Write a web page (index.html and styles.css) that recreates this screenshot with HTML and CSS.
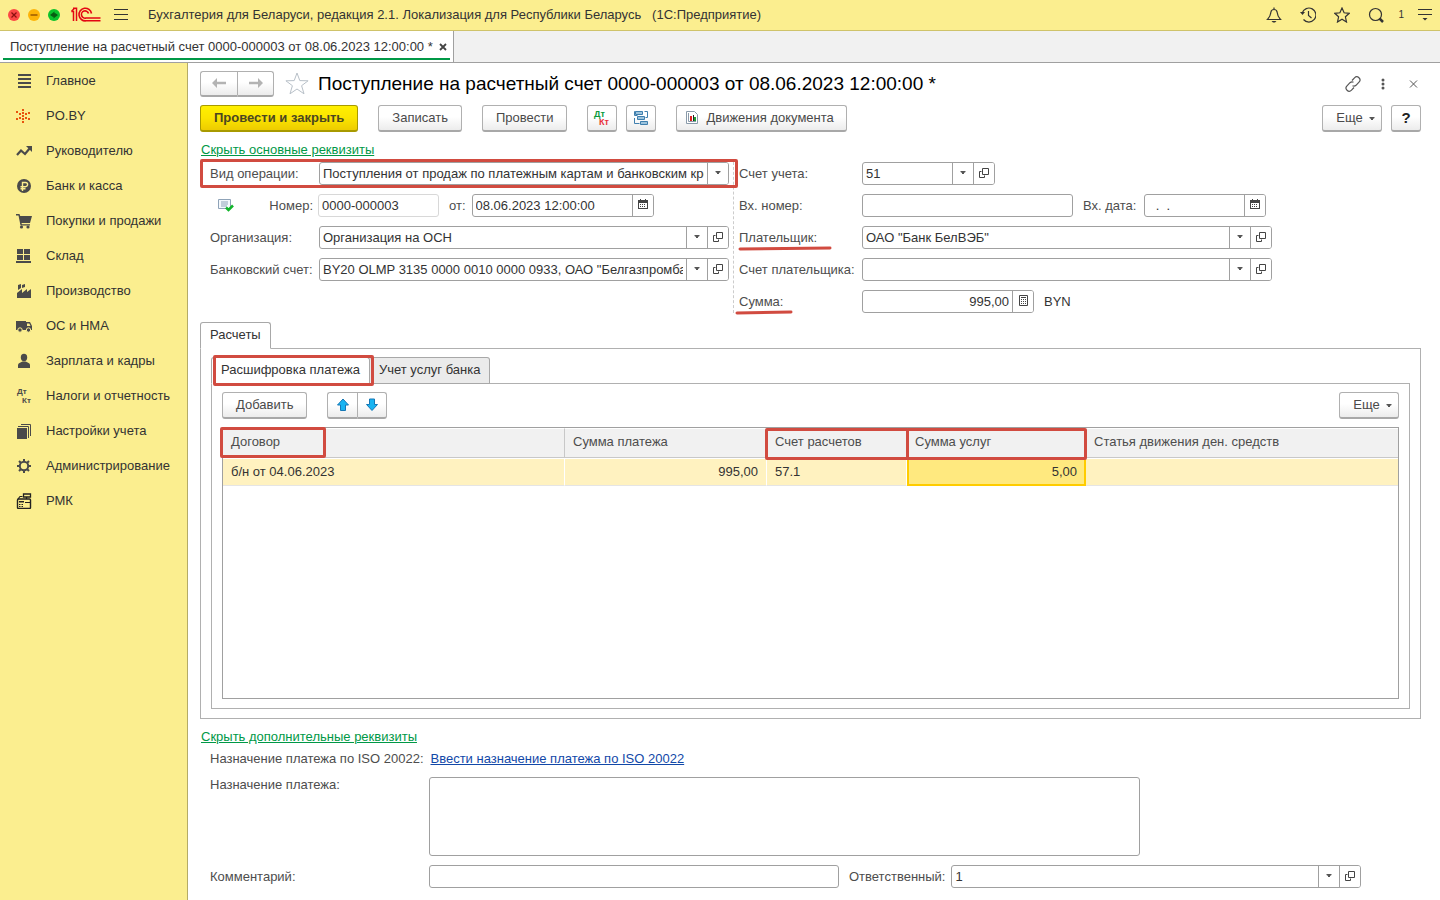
FILE: index.html
```html
<!DOCTYPE html>
<html lang="ru">
<head>
<meta charset="utf-8">
<meta name="viewport" content="width=device-width, initial-scale=1">
<title>Бухгалтерия для Беларуси</title>
<link rel="stylesheet" href="styles.css">
</head>
<body>
<svg class="sprite" aria-hidden="true">
  <symbol id="i-down" viewBox="0 0 6 4"><path d="M.5 0h5v1L4 2v1H2V2L.5 1z" fill="#555"/></symbol>
  <symbol id="i-open" viewBox="0 0 10 10"><path d="M3.5.5h6v6h-6zM2.500 3.500h-2v6h5v-2" fill="none" stroke="#444"/></symbol>
  <symbol id="i-cal" viewBox="0 0 10 11"><path d="M2 0h1v1h4V0h1v1h2v9H0V1h2z" fill="#444"/><path d="M1 4h8v5H1z" fill="#fff"/><path d="M2 5.500h6M2 7.500h6" stroke="#444" stroke-dasharray="1 1"/></symbol>
  <symbol id="i-calc" viewBox="0 0 9 11"><path d="M.5.5h8v10h-8z" fill="none" stroke="#444"/><path d="M2 2.500h5" stroke="#444"/><path d="M2 4.500h5M2 6.500h5M2 8.500h5" stroke="#444" stroke-dasharray="1 1"/></symbol>
</svg>

<header class="topbar">
  <div class="lights">
    <button class="plain" aria-label="Закрыть окно"><svg width="12" height="12"><circle cx="6" cy="6" r="6" fill="#fb4845"/><path d="M3.500 3.500l5 5M8.500 3.500l-5 5" stroke="#8a1010" stroke-width="1.200"/></svg></button>
    <button class="plain" aria-label="Свернуть"><svg width="12" height="12"><circle cx="6" cy="6" r="6" fill="#fdb409"/><path d="M2.500 6h7" stroke="#9a5a00" stroke-width="1.500"/></svg></button>
    <button class="plain" aria-label="Развернуть"><svg width="12" height="12"><circle cx="6" cy="6" r="6" fill="#0bc22c"/><path d="M2 6l4.500-3.500v4L5 8zM10 6L5.500 9.500v-4L7 4z" fill="#075c12"/></svg></button>
  </div>
  <svg class="logo" width="30" height="16" viewBox="0 0 30 16" fill="none" stroke="#e30613" stroke-width="1.500"><path d="M.3 4.500H2.500V14M2 1.300h3.500V14M.5 4.300L3.500 1.200"/><path d="M20.500 6.500A6.300 6.300 0 1 0 15 13.800h14.500M17.500 6.500A3.600 3.600 0 1 0 15 11h14.500" stroke-width="1.600"/></svg>
  <button class="plain burger" aria-label="Меню"><svg width="14" height="12"><path d="M0 .5h14M0 5.500h14M0 10.500h14" stroke="#333"/></svg></button>
  <div class="app-title">Бухгалтерия для Беларуси, редакция 2.1. Локализация для Республики Беларусь &nbsp; (1С:Предприятие)</div>
  <div class="top-tools">
    <button class="plain" aria-label="Уведомления"><svg width="16" height="16" fill="none" stroke="#333" stroke-width="1.200"><path d="M1.500 12.500h13c-2-2-3-3.500-3.300-7C11 3.500 9.500 2.500 8 2.500s-3 1-3.200 3c-.3 3.500-1.300 5-3.300 7zM8 .5v2"/><path d="M5.500 14h5L9 15.500H7z" fill="#333" stroke="none"/></svg></button>
    <button class="plain" aria-label="История"><svg width="16" height="16" fill="none" stroke="#333" stroke-width="1.200"><path d="M2.200 6A7 7 0 1 1 3.500 12.500M8.500 4v4.500l3 2.500"/><path d="M0 5h5L2.500 8z" fill="#333" stroke="none"/></svg></button>
    <button class="plain" aria-label="Избранное"><svg width="16" height="16" fill="none" stroke="#333" stroke-width="1.200"><path d="M8 1l2.100 4.800 5.100.5-3.800 3.500 1.100 5.200L8 12.300 3.500 15l1.100-5.200L.8 6.300l5.100-.5z"/></svg></button>
    <button class="plain" aria-label="Поиск"><svg width="16" height="16" fill="none" stroke="#333" stroke-width="1.200"><circle cx="7.500" cy="7.500" r="6"/><path d="M11.500 11.500l3.500 3.500" stroke-width="2.500"/></svg></button>
    <span class="count">1</span>
    <button class="plain" aria-label="Настройки"><svg width="14" height="12"><path d="M0 .5h14M0 5.500h14" stroke="#333"/><path d="M4.500 9h5L7 11.500z" fill="#333"/></svg></button>
  </div>
</header>

<nav class="window-tabs">
  <div class="window-tab"><a href="#doc" class="window-link">Поступление на расчетный счет 0000-000003 от 08.06.2023 12:00:00 *</a><button class="plain" aria-label="Закрыть вкладку"><svg width="8" height="8"><path d="M1 1l6 6M7 1L1 7" stroke="#444" stroke-width="1.800"/></svg></button></div>
</nav>

<div class="workspace">
  <nav class="sidebar">
    <a href="#"><svg width="16" height="16"><path d="M2 2h13M2 6h13M2 10h13M2 14h13" stroke="#4a4a4a" stroke-width="2"/></svg>Главное</a>
    <a href="#"><svg width="16" height="16" fill="#e8530e"><path d="M6 1h2v2H6zM6 4h2v2H6zM6 7h2v2H6zM6 10h2v2H6zM6 13h2v2H6zM3 5h2v2H3zM3 9h2v2H3zM9 5h2v2H9zM9 9h2v2H9zM0 3h2v2H0zM0 10h2v2H0zM12 4h2v2h-2zM12 10h2v2h-2z"/></svg>PO.BY</a>
    <a href="#"><svg width="16" height="16"><path d="M1 12l4-4.500L9 11l5-6" fill="none" stroke="#4a4a4a" stroke-width="2.200"/><path d="M10 3h6v6z" fill="#4a4a4a"/></svg>Руководителю</a>
    <a href="#"><svg width="16" height="16"><circle cx="8" cy="8" r="7" fill="#4a4a4a"/><path d="M6.500 13V4.500h3a2 2 0 0 1 0 4.200H4.500M4.500 10.700h5" fill="none" stroke="#fbee8f" stroke-width="1.400"/></svg>Банк и касса</a>
    <a href="#"><svg width="16" height="16" fill="#4a4a4a"><path d="M0 1h3.500l.7 2H16l-2 7H5.500l.3 1.300H14v1.200H4.500L2.500 2.500H0z"/><circle cx="5.500" cy="14" r="1.600"/><circle cx="12" cy="14" r="1.600"/></svg>Покупки и продажи</a>
    <a href="#"><svg width="16" height="16" fill="#4a4a4a"><path d="M1 1h6v5H1zM8 1h6v5H8zM1 7h6v5H1zM8 7h6v5H8zM0 13h15v2H0z"/></svg>Склад</a>
    <a href="#"><svg width="16" height="16" fill="#4a4a4a"><path d="M1 15V10l5-4v4l5-4v3l4-3v9zM2 2l3-1v4L2 7zM6 2l3-1v3L6 5z"/></svg>Производство</a>
    <a href="#"><svg width="16" height="16" fill="#4a4a4a"><path fill-rule="evenodd" d="M0 3h10v9H0zM10 4h4l2 4v4h-6zM11 5.500v2.500h3.500l-1.200-2.500z"/><circle cx="4" cy="12" r="2.200" stroke="#fbee8f"/><circle cx="12.500" cy="12" r="2.200" stroke="#fbee8f"/></svg>ОС и НМА</a>
    <a href="#"><svg width="16" height="16" fill="#4a4a4a"><ellipse cx="8" cy="4.500" rx="3.200" ry="3.700"/><path d="M2 15v-3c0-2 2.500-2.500 4.500-3.500h3C11.500 9.500 14 10 14 12v3z"/></svg>Зарплата и кадры</a>
    <a href="#"><svg width="16" height="16" class="dtkt dtkt-dark"><text x="1" y="6">Дт</text><text x="6" y="15">Кт</text></svg>Налоги и отчетность</a>
    <a href="#"><svg width="16" height="16"><path d="M1 5h10v11H1z" fill="#4a4a4a"/><path d="M2 3.500h10.500V15M5 1.500h9.500V13" fill="none" stroke="#4a4a4a"/></svg>Настройки учета</a>
    <a href="#"><svg width="16" height="16" fill="none" stroke="#4a4a4a"><circle cx="8" cy="8" r="4.200" stroke-width="2"/><path d="M8 1v3M8 12v3M1 8h3M12 8h3M3 3l2 2M11 11l2 2M13 3l-2 2M5 11l-2 2" stroke-width="2"/></svg>Администрирование</a>
    <a href="#"><svg width="16" height="16"><path d="M7.500 1h7v3h-7zM10.500 4v2" fill="none" stroke="#222" stroke-width="1.300"/><rect x="1.500" y="6" width="13" height="9.500" rx="1" fill="none" stroke="#222" stroke-width="1.400"/><path d="M2 6l2-2.500h2.500M9 9.500h5" fill="none" stroke="#222" stroke-width="1.200"/><path d="M3 8h5v1.500H3zM3 11h1.500v1H3zM5.500 11H7v1H5.500zM3 13h1.500v1H3zM5.500 13H7v1H5.500z" fill="#222"/></svg>РМК</a>
  </nav>

  <main class="doc" id="doc">
    <div class="doc-head">
      <div class="pair">
        <button class="btn" aria-label="Назад"><svg width="14" height="10"><path d="M0 5l5-5v3.700h9v2.600H5V10z" fill="#b3b3b3"/></svg></button>
        <button class="btn" aria-label="Вперед"><svg width="14" height="10"><path d="M14 5L9 0v3.700H0v2.600h9V10z" fill="#b3b3b3"/></svg></button>
      </div>
      <button class="plain star" aria-label="В избранное"><svg width="24" height="23" viewBox="0 0 24 23"><path d="M12 1l2.800 7.600 8.300.2-6.500 4.900L19 21.800l-7-4.800-7 4.800 2.400-8.100L.9 8.800l8.300-.2z" fill="#fff" stroke="#b8c0c8"/></svg></button>
      <h1>Поступление на расчетный счет 0000-000003 от 08.06.2023 12:00:00 *</h1>
      <div class="head-tools">
        <button class="plain" aria-label="Ссылка"><svg width="16" height="16" fill="none" stroke="#555" stroke-width="1.200"><path d="M7 4.500l2.500-2.700a3 3 0 0 1 4.500 4.400L11 9.300a3 3 0 0 1-3.500.5M9 11.500l-2.500 2.700A3 3 0 0 1 2 9.800L5 6.700a3 3 0 0 1 3.500-.5"/></svg></button>
        <button class="plain" aria-label="Действия"><svg width="16" height="12" fill="#555"><circle cx="8" cy="2" r="1.500"/><circle cx="8" cy="6" r="1.500"/><circle cx="8" cy="10" r="1.500"/></svg></button>
        <button class="plain" aria-label="Закрыть"><svg width="16" height="8"><path d="M5 .5l7 7M12 .5l-7 7" stroke="#555"/></svg></button>
      </div>
    </div>

    <div class="toolbar">
      <button class="btn primary">Провести и закрыть</button>
      <button class="btn">Записать</button>
      <button class="btn">Провести</button>
      <div class="group">
        <button class="btn square" aria-label="Проводки"><svg width="18" height="18" class="dtkt dtkt-large"><text x="1" y="8" fill="#0a9a3c">Дт</text><text x="6" y="16" fill="#e8303a">Кт</text></svg></button>
        <button class="btn square" aria-label="Структура подчиненности"><svg width="16" height="16"><path d="M4.500 5.500h-3v-4h1M1.500 8v5.500h5M11.500 1.500h3v6h-2" fill="none" stroke="#3f7fae"/><path d="M2.500 1.500h7v3h-7zM4.500 6.500h7v3h-7zM7.500 11.500h7v3h-7z" fill="#9cc3dc" stroke="#3f7fae"/></svg></button>
      </div>
      <button class="btn moves"><svg width="14" height="15"><path d="M1.500 1.500h8l3 3v9h-11z" fill="#fff" stroke="#8a9baa"/><path d="M3.500 3v8.500H11" fill="none" stroke="#8a9baa"/><path d="M5 6h2v5H5z" fill="#e02020"/><path d="M8 5h1v6H8z" fill="#222"/><path d="M9 7h2v4H9z" fill="#18a030"/></svg>Движения документа</button>
      <div class="group right">
        <button class="btn more">Еще <svg width="6" height="4"><use href="#i-down"/></svg></button>
        <button class="btn square help">?</button>
      </div>
    </div>

    <a class="toggle" href="#">Скрыть основные реквизиты</a>

    <div class="form">
      <div class="col col-left">
        <div class="row marked">
          <label class="lab" for="op">Вид операции:</label>
          <div class="field grow"><select id="op"><option>Поступления от продаж по платежным картам и банковским кредитам</option></select><span class="arrow"><svg width="6" height="4"><use href="#i-down"/></svg></span></div>
        </div>
        <div class="row">
          <span class="lab num-lab"><svg width="16" height="14"><path d="M.5 1.500h12v9H.5z" fill="#f4f8fc" stroke="#8fa3b8"/><path d="M3 4h7M3 6h7M3 8h6" stroke="#8fa3b8"/><path d="M8 9.500l2.500 2.500L15 7.500" fill="none" stroke="#11b52a" stroke-width="2.500"/></svg><label for="num">Номер:</label></span>
          <div class="field pale w-num"><input id="num" value="0000-000003" readonly></div>
          <label class="mid" for="date">от:</label>
          <div class="field w-date"><input id="date" value="08.06.2023 12:00:00"><button class="fb" aria-label="Календарь"><svg width="10" height="11"><use href="#i-cal"/></svg></button></div>
        </div>
        <div class="row">
          <label class="lab" for="org">Организация:</label>
          <div class="field grow"><select id="org"><option>Организация на ОСН</option></select><span class="arrow"><svg width="6" height="4"><use href="#i-down"/></svg></span><button class="fb" aria-label="Открыть"><svg width="10" height="10"><use href="#i-open"/></svg></button></div>
        </div>
        <div class="row">
          <label class="lab" for="acc">Банковский счет:</label>
          <div class="field grow"><select id="acc"><option>BY20 OLMP 3135 0000 0010 0000 0933, ОАО "Белгазпромбанк"</option></select><span class="arrow"><svg width="6" height="4"><use href="#i-down"/></svg></span><button class="fb" aria-label="Открыть"><svg width="10" height="10"><use href="#i-open"/></svg></button></div>
        </div>
      </div>
      <div class="col col-right">
        <div class="row">
          <label class="lab" for="ledger">Счет учета:</label>
          <div class="field w-ledger"><select id="ledger"><option>51</option></select><span class="arrow"><svg width="6" height="4"><use href="#i-down"/></svg></span><button class="fb" aria-label="Открыть"><svg width="10" height="10"><use href="#i-open"/></svg></button></div>
        </div>
        <div class="row">
          <label class="lab" for="innum">Вх. номер:</label>
          <div class="field w-innum"><input id="innum"></div>
          <label class="mid mid-wide" for="indate">Вх. дата:</label>
          <div class="field w-indate"><input id="indate" value="  .  ."><button class="fb" aria-label="Календарь"><svg width="10" height="11"><use href="#i-cal"/></svg></button></div>
        </div>
        <div class="row">
          <label class="lab under" for="payer">Плательщик:<svg class="stroke" width="94" height="5" aria-hidden="true"><path d="M2 3L92 2" stroke="#d14b40" stroke-width="3" stroke-linecap="round"/></svg></label>
          <div class="field grow"><select id="payer"><option>ОАО "Банк БелВЭБ"</option></select><span class="arrow"><svg width="6" height="4"><use href="#i-down"/></svg></span><button class="fb" aria-label="Открыть"><svg width="10" height="10"><use href="#i-open"/></svg></button></div>
        </div>
        <div class="row">
          <label class="lab" for="payacc">Счет плательщика:</label>
          <div class="field grow"><select id="payacc"><option></option></select><span class="arrow"><svg width="6" height="4"><use href="#i-down"/></svg></span><button class="fb" aria-label="Открыть"><svg width="10" height="10"><use href="#i-open"/></svg></button></div>
        </div>
        <div class="row">
          <label class="lab under" for="sum">Сумма:<svg class="stroke stroke-sum" width="58" height="5" aria-hidden="true"><path d="M2 3L56 2" stroke="#d14b40" stroke-width="3" stroke-linecap="round"/></svg></label>
          <div class="field w-sum"><input id="sum" class="numeric" value="995,00"><button class="fb" aria-label="Калькулятор"><svg width="9" height="11"><use href="#i-calc"/></svg></button></div>
          <span class="mid cur">BYN</span>
        </div>
      </div>
    </div>

    <section class="tabs outer">
      <div class="tab-row" role="tablist"><button class="tab active" role="tab">Расчеты</button></div>
      <div class="panel">
        <div class="tab-row" role="tablist"><button class="tab active marked-tab" role="tab">Расшифровка платежа</button><button class="tab" role="tab">Учет услуг банка</button></div>
        <div class="panel inner">
          <div class="grid-tools">
            <button class="btn">Добавить</button>
            <div class="pair blue">
              <button class="btn" aria-label="Вверх"><svg width="14" height="14"><path d="M7 1l5.500 6H9.500v5.500h-5V7h-3z" fill="#18b4f2" stroke="#1577b5"/></svg></button>
              <button class="btn" aria-label="Вниз"><svg width="14" height="14"><path d="M7 12.500L1.500 6.500h3V1h5v5.500h3z" fill="#18b4f2" stroke="#1577b5"/></svg></button>
            </div>
            <button class="btn more right">Еще <svg width="6" height="4"><use href="#i-down"/></svg></button>
          </div>
          <div class="grid-box">
            <table>
              <colgroup><col class="c1"><col class="c2"><col class="c3"><col class="c4"><col></colgroup>
              <thead><tr><th>Договор<span class="mark m1"></span></th><th>Сумма платежа</th><th>Счет расчетов<span class="mark m2"></span></th><th>Сумма услуг<span class="mark m3"></span></th><th>Статья движения ден. средств</th></tr></thead>
              <tbody><tr><td>б/н от 04.06.2023</td><td class="numeric">995,00</td><td>57.1</td><td class="numeric current">5,00</td><td></td></tr></tbody>
            </table>
          </div>
        </div>
      </div>
    </section>

    <a class="toggle" href="#">Скрыть дополнительные реквизиты</a>
    <div class="iso"><span>Назначение платежа по ISO 20022:</span><a href="#">Ввести назначение платежа по ISO 20022</a></div>
    <div class="extra">
      <label for="purpose">Назначение платежа:</label>
      <textarea id="purpose"></textarea>
    </div>
    <div class="extra">
      <label for="comment">Комментарий:</label>
      <div class="field w-wide"><input id="comment"></div>
      <label class="mid" for="resp">Ответственный:</label>
      <div class="field w-wide"><select id="resp"><option>1</option></select><span class="arrow"><svg width="6" height="4"><use href="#i-down"/></svg></span><button class="fb" aria-label="Открыть"><svg width="10" height="10"><use href="#i-open"/></svg></button></div>
    </div>
  </main>
</div>
</body>
</html>
```
FILE: styles.css
```css
* { box-sizing: border-box; }
body {
  margin: 0;
  min-height: 100vh;
  display: flex;
  flex-direction: column;
  font: 13px/16px "Liberation Sans", Arial, sans-serif;
  color: #333;
  background: #fff;
}
button, input, select, textarea { font: inherit; color: inherit; margin: 0; }
svg { display: block; flex: none; }
.sprite { position: absolute; width: 0; height: 0; }
.plain { border: 0; padding: 0; background: none; cursor: pointer; }

.topbar {
  display: flex;
  align-items: center;
  height: 31px;
  padding: 0 8px;
  background: #fbee8f;
  border-bottom: 1px solid #cfc36a;
}
.lights { display: flex; gap: 8px; }
.logo { margin-left: 11px; }
.burger { margin-left: 13px; }
.app-title { margin-left: 20px; white-space: nowrap; }
.top-tools { display: flex; align-items: center; gap: 18px; margin-left: auto; }
.count { font-size: 10px; margin: 0 -4px; }

.window-tabs {
  display: flex;
  height: 32px;
  background: #f1f1f1;
  border-bottom: 1px solid #a0a0a0;
}
.window-tab {
  display: flex;
  align-items: center;
  gap: 6px;
  padding: 0 6px 0 10px;
  background: linear-gradient(#009846, #009846) 3px 27px / calc(100% - 6px) 2px no-repeat #fff;
  border-right: 1px solid #a0a0a0;
}
.window-link { color: inherit; text-decoration: none; white-space: nowrap; }

.workspace { flex: 1; display: flex; }
.sidebar {
  flex: none;
  width: 188px;
  background: #fbee8f;
  border-right: 1px solid #b5ab66;
}
.sidebar a {
  display: flex;
  align-items: center;
  gap: 14px;
  height: 35px;
  padding-left: 16px;
  color: #333;
  text-decoration: none;
}
.dtkt { font: bold 8px "Liberation Sans", Arial, sans-serif; }
.dtkt-large { font-size: 9px; }
.dtkt-dark { fill: #4a4a4a; }

.doc {
  flex: 1;
  min-width: 0;
  display: flex;
  flex-direction: column;
  padding: 8px 19px 12px 12px;
}
.doc-head { display: flex; align-items: center; height: 25px; }
.doc-head h1 { margin: 0 0 0 9px; font-size: 19px; line-height: 24px; font-weight: 400; color: #000; white-space: nowrap; }
.star { margin-left: 11px; }
.head-tools { display: flex; align-items: center; gap: 14px; margin-left: auto; }

.btn {
  display: flex;
  align-items: center;
  justify-content: center;
  height: 27px;
  padding: 0 13px 1px;
  border: 1px solid #b0b0b0;
  border-bottom: 2px solid #a8a8a8;
  border-radius: 3px;
  background: linear-gradient(#fff 45%, #ececec);
  color: #4a4a4a;
  white-space: nowrap;
}
.primary {
  border-color: #a89a00;
  background: linear-gradient(#fff000, #fbe400 50%, #edcc00);
  color: #4a4620;
  font-weight: 700;
}
.square { width: 30px; padding: 0 0 1px; }
.help { font-size: 15px; font-weight: 700; color: #222; }
.moves { gap: 7px; padding: 0 12px 1px 8px; }
.more { width: 60px; gap: 6px; padding: 0 0 1px 7px; }
.more svg { margin-top: 3px; }
.pair { display: flex; }
.pair .btn { width: 37px; height: 26px; padding: 0; }
.pair .btn:first-child { border-radius: 3px 0 0 3px; border-right: 0; }
.pair .btn:last-child { border-radius: 0 3px 3px 0; }
.pair.blue { margin-left: 20px; }
.pair.blue .btn { width: 30px; height: 27px; }
.toolbar { display: flex; gap: 20px; margin-top: 9px; }
.group { display: flex; gap: 9px; }
.right { margin-left: auto; }

.toggle { align-self: flex-start; margin: 10px 0 4px 1px; color: #009846; }

.form { display: grid; grid-template-columns: minmax(0, 534px) minmax(0, 538px); }
.col { display: flex; flex-direction: column; gap: 9px; }
.col-left { padding: 0 4px 0 10px; border-right: 1px dashed #ccc; }
.col-right { padding-left: 5px; }
.row { position: relative; display: flex; align-items: center; }
.lab { flex: none; width: 109px; color: #4d4d4d; }
.col-right .lab { width: 123px; }
.num-lab { display: flex; justify-content: space-between; padding: 0 5px 0 8px; width: 108px; }
.mid { color: #4d4d4d; margin: 0 6px 0 10px; }
.mid-wide { margin-right: 8px; }
.cur { color: #333; }
.field {
  display: grid;
  grid-template-columns: minmax(0, 1fr) auto auto;
  height: 23px;
  border: 1px solid #a0a0a0;
  border-radius: 3px;
  background: #fff;
  overflow: hidden;
}
.pale { border-color: #d8d8d8; }
.grow { flex: 1; min-width: 0; }
.w-num { width: 121px; }
.w-date { width: 182px; }
.w-ledger { width: 133px; }
.w-innum { width: 211px; }
.w-indate { width: 122px; }
.w-sum { width: 172px; }
.w-wide { flex: 0 1 410px; min-width: 0; }
.field input, .field select {
  grid-row: 1;
  grid-column: 1;
  min-width: 0;
  width: 100%;
  border: 0;
  outline: 0;
  padding: 0 3px;
  background: none;
  appearance: none;
  white-space: pre;
}
.field select { grid-column: 1 / 3; padding-right: 24px; }
.numeric { text-align: right; }
.arrow, .fb {
  grid-row: 1;
  width: 21px;
  display: flex;
  align-items: center;
  justify-content: center;
  border: 0;
  border-left: 1px solid #a0a0a0;
  padding: 0 0 2px;
  background: #fff;
}
.arrow { grid-column: 2; pointer-events: none; }
.fb { grid-column: 3; }

/* Hand-drawn highlights over the form */
.marked::after {
  content: "";
  position: absolute;
  inset: -3px -9px -3px -10px;
  border: 3px solid #d14b40;
  border-radius: 2px;
  pointer-events: none;
}
.under { position: relative; }
.stroke { position: absolute; left: -1px; top: 16px; }
.stroke-sum { left: -4px; }
.marked-tab::after {
  content: "";
  position: absolute;
  inset: -3px -5px -3px 1px;
  border: 3px solid #d14b40;
  border-radius: 2px;
  pointer-events: none;
}
.mark { position: absolute; z-index: 2; border: 3px solid #d14b40; border-radius: 2px; }
.m1 { left: -3px; top: -2px; width: 106px; height: 31px; }
.m2 { left: -2px; right: -2px; top: -1px; bottom: -3px; }
.m3 { left: -1px; right: -1px; top: -1px; bottom: -3px; }

.tabs { flex: 1; display: flex; flex-direction: column; margin-top: 9px; }
.tab-row { display: flex; height: 27px; }
.tab {
  position: relative;
  height: 27px;
  padding: 0 9px 2px;
  border: 1px solid #a8a8a8;
  border-radius: 3px 3px 0 0;
  background: #ebebeb;
  color: #333;
}
.tab.active { background: #fff; border-bottom-color: #fff; z-index: 1; }
.tab + .tab { border-left: 0; }
.panel {
  flex: 1;
  display: flex;
  flex-direction: column;
  margin-top: -1px;
  padding: 8px 10px 9px;
  border: 1px solid #b0b0b0;
}
.grid-tools { display: flex; }
.grid-box { flex: 1; min-height: 120px; margin-top: 8px; border: 1px solid #a0a0a0; }
table { width: 100%; table-layout: fixed; border-collapse: separate; border-spacing: 0; }
.c1 { width: 342px; }
.c2 { width: 202px; }
.c3 { width: 140px; }
.c4 { width: 179px; }
th, td { padding: 0 8px; text-align: left; font-weight: 400; white-space: nowrap; }
th {
  position: relative;
  height: 30px;
  padding-bottom: 2px;
  color: #4d4d4d;
  background: #f1f1f1;
  border: 1px solid #fff;
  border-width: 1px 0 0;
  border-bottom: 1px solid #c8c8c8;
}
th:nth-child(1) { border-right: 1px solid #c8c8c8; }
th:nth-child(2) { border-right: 1px solid #c8c8c8; }
td {
  height: 28px;
  background: #fff2c0;
  border: 1px solid #fff;
  border-width: 1px 1px 0 0;
  border-bottom: 1px solid #e5e5e5;
}
td:last-child { border-right: 0; }
td.numeric { text-align: right; }
td.current { background: #ffe97f; border: 2px solid #fc0; padding-right: 7px; }

.iso { display: flex; gap: 7px; margin: 2px 0 10px 10px; color: #4d4d4d; }
.iso a { color: #1248a8; }
.extra { display: flex; padding-left: 10px; margin-bottom: 9px; }
.extra > label:first-child { width: 219px; flex: none; color: #4d4d4d; }
.extra:last-child { align-items: center; margin-bottom: 0; }
textarea {
  flex: 0 1 711px;
  height: 79px;
  border: 1px solid #a0a0a0;
  border-radius: 3px;
  resize: none;
}
```
